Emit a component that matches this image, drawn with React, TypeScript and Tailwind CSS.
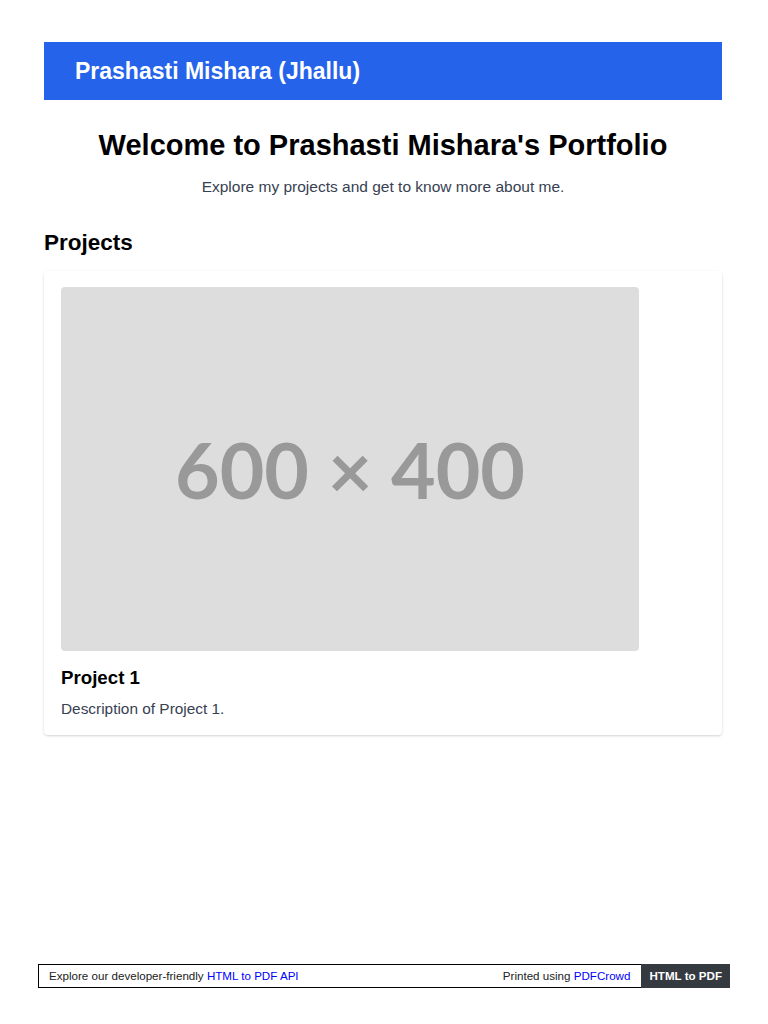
export default function App() {
  return (
    <div className="relative min-h-[1024px] bg-white font-['Liberation_Sans',Arial,sans-serif]">
      <div className="ml-[44px] w-[678px] pt-[42px]">
        <header className="bg-[#2563eb] h-[58px] flex items-center px-[31px]">
          <h1 className="text-white text-[23px] font-bold leading-[28px]">Prashasti Mishara (Jhallu)</h1>
        </header>

        <section className="text-center pt-[27px]">
          <h2 className="text-[29px] font-bold text-black leading-[36px]">
            Welcome to Prashasti Mishara's Portfolio
          </h2>
          <p className="mt-[14px] text-[15.5px] text-[#374151] leading-[20px]">
            Explore my projects and get to know more about me.
          </p>
        </section>

        <section className="mt-[32px]">
          <h3 className="text-[22.5px] font-bold text-black leading-[28px]">Projects</h3>
          <div className="mt-[14px] bg-white rounded-[4px] shadow-[0_1px_3px_rgba(0,0,0,0.12),0_1px_2px_rgba(0,0,0,0.06)] p-[16px] pl-[17px]">
            <div className="w-[578px] h-[364px] bg-[#dddddd] rounded-[4px] flex items-center justify-center">
              <span className="font-['Lato',sans-serif] font-bold text-[#999999] text-[77px] leading-none">
                600 × 400
              </span>
            </div>
            <h4 className="mt-[16px] text-[18.7px] font-bold text-black leading-[22px]">Project 1</h4>
            <p className="mt-[10px] text-[15.4px] text-[#374151] leading-[20px]">Description of Project 1.</p>
          </div>
        </section>
      </div>

      <footer className="absolute left-[38px] top-[964px] w-[692px] h-[24px] flex border border-black text-[11.6px]">
        <div className="flex-1 flex items-center justify-between pl-[10px] pr-[11px]">
          <span className="text-[#222]">
            Explore our developer-friendly <span className="text-[#0000ff]">HTML to PDF API</span>
          </span>
          <span className="text-[#222]">
            Printed using <span className="text-[#0000ff]">PDFCrowd</span>
          </span>
        </div>
        <div className="bg-[#343a40] text-white font-bold flex items-center px-[8px] -my-px -mr-px">
          HTML to PDF
        </div>
      </footer>
    </div>
  );
}
